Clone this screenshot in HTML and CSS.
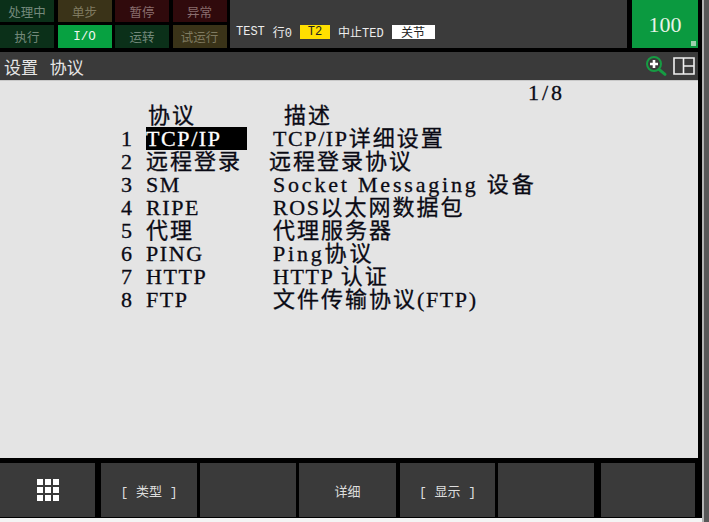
FILE: index.html
```html
<!DOCTYPE html>
<html lang="zh">
<head>
<meta charset="utf-8">
<title>设置 协议</title>
<link rel="stylesheet" href="styles.css">
</head>
<body>
<div class="frame">
  <div class="window">
    <header class="status">
      <div class="lamps">
        <div class="lamp green">处理中</div>
        <div class="lamp olive">单步</div>
        <div class="lamp red">暂停</div>
        <div class="lamp red">异常</div>
        <div class="lamp green">执行</div>
        <div class="lamp on">I/O</div>
        <div class="lamp green">运转</div>
        <div class="lamp olive">试运行</div>
      </div>
      <div class="info">
        <span>TEST</span><span class="gap-s">行0</span><span class="badge yellow">T2</span><span class="gap-s">中止TED</span><span class="badge white">关节</span>
      </div>
      <div class="override">100<i class="corner"></i></div>
    </header>
    <div class="titlebar">
      <span class="title">设置 协议</span>
      <svg class="zoom-icon" width="24" height="24" viewBox="0 0 24 24" aria-hidden="true">
        <circle cx="10" cy="10" r="7" fill="none" stroke="#169c43" stroke-width="2"/>
        <path d="M15 15.4l6 5" stroke="#169c43" stroke-width="3" stroke-linecap="round"/>
        <path d="M6 10h8M10 6v8" stroke="#fff" stroke-width="2.6"/>
      </svg>
      <svg class="split-icon" width="22" height="18" viewBox="0 0 22 18" aria-hidden="true">
        <path d="M1 1h20v16H1zM10.5 1v16M10.5 9H21" fill="none" stroke="#f0f0f0" stroke-width="1.6"/>
      </svg>
    </div>
    <main class="content">
      <div class="page">1/8</div>
      <div class="table">
        <div class="head"><span class="h1 cn">协议</span><span class="cn">描述</span></div>
        <div class="row"><span class="num">1</span><span class="name"><span class="sel">TCP/IP</span></span><span class="desc">TCP/IP<span class="cn">详细设置</span></span></div>
        <div class="row"><span class="num">2</span><span class="name cn">远程登录</span><span class="desc shift cn">远程登录协议</span></div>
        <div class="row"><span class="num">3</span><span class="name">SM</span><span class="desc wide">Socket Messaging <span class="cn">设备</span></span></div>
        <div class="row"><span class="num">4</span><span class="name">RIPE</span><span class="desc">ROS<span class="cn">以太网数据包</span></span></div>
        <div class="row"><span class="num">5</span><span class="name cn">代理</span><span class="desc cn">代理服务器</span></div>
        <div class="row"><span class="num">6</span><span class="name">PING</span><span class="desc wide">Ping<span class="cn">协议</span></span></div>
        <div class="row"><span class="num">7</span><span class="name">HTTP</span><span class="desc">HTTP <span class="cn">认证</span></span></div>
        <div class="row"><span class="num">8</span><span class="name">FTP</span><span class="desc"><span class="cn">文件传输协议</span>(FTP)</span></div>
      </div>
    </main>
    <footer class="keys">
      <div class="key k1"><svg width="22" height="22" viewBox="0 0 22 22" aria-hidden="true"><path fill="#fff" d="M0 0h6v6H0zM8 0h6v6H8zM16 0h6v6h-6zM0 8h6v6H0zM8 8h6v6H8zM16 8h6v6h-6zM0 16h6v6H0zM8 16h6v6h-6zM16 16h6v6h-6z"/></svg></div>
      <div class="key k2">[ 类型 ]</div>
      <div class="key k3"></div>
      <div class="key k4">详细</div>
      <div class="key k5">[ 显示 ]</div>
      <div class="key k6"></div>
      <div class="key k7"></div>
    </footer>
  </div>
  <div class="sidebar"></div>
</div>
</body>
</html>
```

FILE: styles.css
```css
* { box-sizing: border-box; }
html, body { margin: 0; padding: 0; }
body {
  width: 709px;
  height: 522px;
  overflow: hidden;
  background: #f4f4f4;
  font-family: "Liberation Mono", "Noto Sans CJK SC", monospace;
}
.frame { display: flex; height: 522px; }
.window {
  width: 702px;
  height: 518px;
  padding-right: 4px;
  background: #000;
  display: flex;
  flex-direction: column;
}
.sidebar {
  width: 7px;
  background: #585858;
  border-left: 2px solid #b4b4b4;
}
.status { display: flex; height: 48px; }
.lamps {
  width: 227px;
  display: grid;
  grid-template-columns: 54px 54px 54px 54px;
  grid-template-rows: 22px 23px;
  column-gap: 3.5px;
  row-gap: 3px;
}
.lamp {
  display: flex;
  align-items: center;
  justify-content: center;
  font-size: 12.5px;
}
.lamp.green { background: #0b3019; color: #74897b; }
.lamp.olive { background: #3a3318; color: #7f7a60; }
.lamp.red { background: #300a0c; color: #8a6e6e; }
.lamp.on { background: #07a141; color: #f0f6f0; }
.info {
  margin-left: 3px;
  width: 397px;
  background: #3b3b3b;
  color: #ececec;
  font-size: 12px;
  display: flex;
  align-items: center;
  padding: 16px 0 0 6px;
}
.gap-s { margin-left: 8px; }
.badge {
  margin-left: 8px;
  height: 14px;
  display: flex;
  align-items: center;
  justify-content: center;
}
.badge.yellow { width: 30px; background: #ffdf00; color: #222; }
.badge.white { width: 43px; background: #fff; color: #222; }
.override {
  margin-left: 5px;
  width: 66px;
  background: #0b9a40;
  color: #e8f3e8;
  font-family: "Liberation Serif", serif;
  font-size: 22px;
  display: flex;
  align-items: center;
  justify-content: center;
  padding-top: 2px;
  position: relative;
}
.corner {
  position: absolute;
  right: 2px;
  bottom: 2px;
  width: 5px;
  height: 5px;
  background: #9ed0ae;
}
.titlebar {
  margin-top: 4px;
  height: 28px;
  background: #3a3a3a;
  color: #e6e6e6;
  display: flex;
  align-items: center;
  padding: 0 3px 0 4px;
}
.title {
  flex: 1;
  font-size: 17px;
  word-spacing: 8px;
  font-family: "Noto Sans CJK SC", sans-serif;
}
.zoom-icon { margin-right: 5px; }
.content {
  height: 378px;
  background: #e4e4e4;
  border-top: 1px solid #c8c8c8;
  color: #0a0a14;
  position: relative;
  font-family: "Liberation Serif", "Noto Sans CJK SC", serif;
  font-size: 22px;
  letter-spacing: 1.6px;
  -webkit-text-stroke: 0.3px;
}
.cn {
  font-family: "Noto Sans CJK SC", sans-serif;
  font-size: 22px;
  letter-spacing: 2px;
  line-height: 23px;
}
.wide { letter-spacing: 2.8px; }
.wide .cn { letter-spacing: 3px; }
.page {
  position: absolute;
  left: 528px;
  top: 0;
  line-height: 24px;
  letter-spacing: 3px;
}
.table { padding: 21px 0 0 121px; line-height: 23px; }
.head { display: flex; align-items: baseline; height: 23px; }
.h1 { margin-left: 27px; width: 136px; }
.row { display: flex; align-items: baseline; height: 23px; white-space: nowrap; }
.num { width: 25px; }
.name { width: 127px; }
.sel {
  display: inline-block;
  background: #000;
  color: #fff;
  width: 101px;
  line-height: 23px;
}
.shift { margin-left: -4px; }
.keys { margin-top: 5px; display: flex; height: 54px; }
.key {
  background: #3a3a3a;
  color: #dedede;
  font-size: 13px;
  display: flex;
  align-items: center;
  justify-content: center;
  white-space: pre;
}
.k1 { width: 95px; }
.k2 { width: 96px; margin-left: 6px; }
.k3 { width: 96px; margin-left: 3px; }
.k4 { width: 97px; margin-left: 3px; }
.k5 { width: 95px; margin-left: 4px; }
.k6 { width: 96px; margin-left: 3px; }
.k7 { width: 94px; margin-left: 7px; }
```
